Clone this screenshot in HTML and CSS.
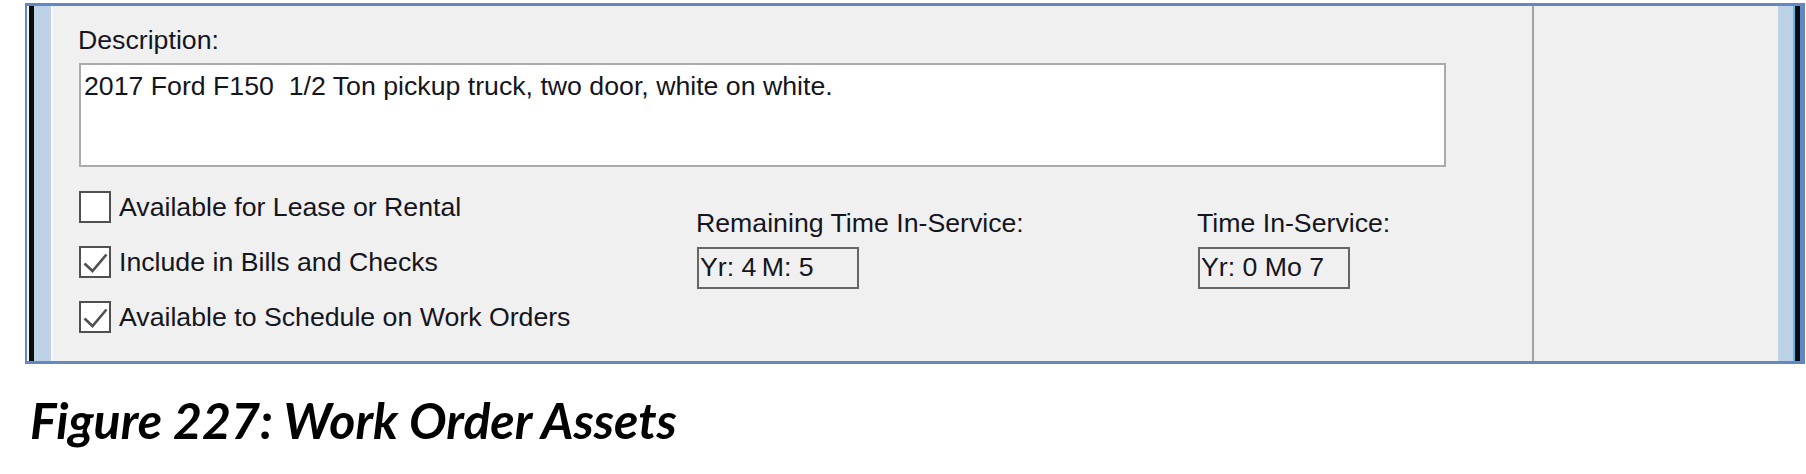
FILE: index.html
```html
<!DOCTYPE html>
<html lang="en">
<head>
    <meta charset="UTF-8">
    <meta name="viewport" content="width=device-width, initial-scale=1.0">
    <title>Work Order Assets</title>
    <link rel="stylesheet" href="styles.css">
</head>
<body>
    <div class="window">
        <div class="rail rail-left">
            <span class="rail-gap"></span>
            <span class="rail-dark"></span>
            <span class="rail-tint"></span>
            <span class="rail-hi"></span>
        </div>

        <div class="panel">
            <label class="field-label">Description:</label>
            <div class="textbox">2017 Ford F150&nbsp; 1/2 Ton pickup truck, two door, white on white.</div>

            <div class="options">
                <div class="checks">
                    <div class="check-row">
                        <span class="checkbox"></span>
                        <span>Available for Lease or Rental</span>
                    </div>
                    <div class="check-row">
                        <span class="checkbox">
                            <svg viewBox="0 0 28 28" width="28" height="28"><path d="M3.5 15.5 L11.5 23 L25.5 6.5" /></svg>
                        </span>
                        <span>Include in Bills and Checks</span>
                    </div>
                    <div class="check-row">
                        <span class="checkbox">
                            <svg viewBox="0 0 28 28" width="28" height="28"><path d="M3.5 15.5 L11.5 23 L25.5 6.5" /></svg>
                        </span>
                        <span>Available to Schedule on Work Orders</span>
                    </div>
                </div>

                <div class="readout readout-remaining">
                    <div class="field-label">Remaining Time In-Service:</div>
                    <div class="value-box value-wide">Yr: 4&#8201;M: 5</div>
                </div>

                <div class="readout">
                    <div class="field-label">Time In-Service:</div>
                    <div class="value-box">Yr: 0 Mo 7</div>
                </div>
            </div>
        </div>

        <div class="side"></div>

        <div class="rail rail-right">
            <span class="rail-tint"></span>
            <span class="rail-cyan"></span>
            <span class="rail-dark"></span>
        </div>
    </div>

    <p class="caption">Figure 227: Work Order Assets</p>
</body>
</html>
```

FILE: styles.css
```css
:root {
    --frame: #6088c3;
    --panel: #f0f0f0;
    --tint: #bdd1e7;
    --ink: #15151e;
    --soft-border: #ababab;
    --hard-border: #666666;
}

body {
    margin: 0;
    background-color: white;
    font-family: 'Liberation Sans', Arial, sans-serif;
    color: var(--ink);
}

.window {
    display: flex;
    width: 1773px;
    margin: 3px 0 0 25px;
    border-style: solid;
    border-color: var(--frame);
    border-width: 3px 5px 3px 2px;
    background-color: var(--panel);
    font-size: 26.7px;
    line-height: 31px;
}

.rail {
    display: flex;
}

.rail-gap {
    width: 2px;
    background-color: #f6f8fb;
}

.rail-dark {
    width: 5px;
    background-color: #0c0c0c;
}

.rail-tint {
    width: 17px;
    background-color: var(--tint);
}

.rail-hi {
    width: 2px;
    background-color: #f7f9fc;
}

.rail-right .rail-tint {
    width: 15px;
}

.rail-right .rail-cyan {
    width: 2px;
    background-color: #55bde9;
}

.rail-right .rail-dark {
    width: 5px;
}

.panel {
    width: 1453px;
    padding: 19px 0 28px 26px;
    border-right: 2px solid #a3a3a3;
}

.side {
    flex: 1;
}

.field-label {
    display: block;
    margin-left: -1px;
}

.textbox {
    box-sizing: border-box;
    width: 1367px;
    height: 104px;
    margin-top: 7px;
    padding: 6px 3px;
    border: 2px solid var(--soft-border);
    background-color: white;
    white-space: pre;
}

.options {
    display: flex;
    margin-top: 24px;
}

.checks {
    display: flex;
    flex-direction: column;
    gap: 23px;
    width: 618px;
}

.check-row {
    display: flex;
    align-items: center;
    gap: 8px;
    height: 32px;
}

.checkbox {
    box-sizing: border-box;
    width: 32px;
    height: 32px;
    border: 2px solid #505050;
    background-color: white;
}

.checkbox svg {
    display: block;
}

.checkbox path {
    fill: none;
    stroke: #505050;
    stroke-width: 2.6;
}

.readout {
    padding-top: 17px;
}

.readout-remaining {
    width: 501px;
}

.value-box {
    box-sizing: border-box;
    width: 152px;
    height: 42px;
    margin-top: 8px;
    padding: 3px 1px;
    border: 2px solid var(--hard-border);
}

.value-wide {
    width: 162px;
}

.caption {
    margin: 26px 0 0 30px;
    font-family: Lato, 'Open Sans', sans-serif;
    font-size: 50px;
    font-weight: bold;
    font-style: italic;
    line-height: 60px;
    color: black;
}
```
